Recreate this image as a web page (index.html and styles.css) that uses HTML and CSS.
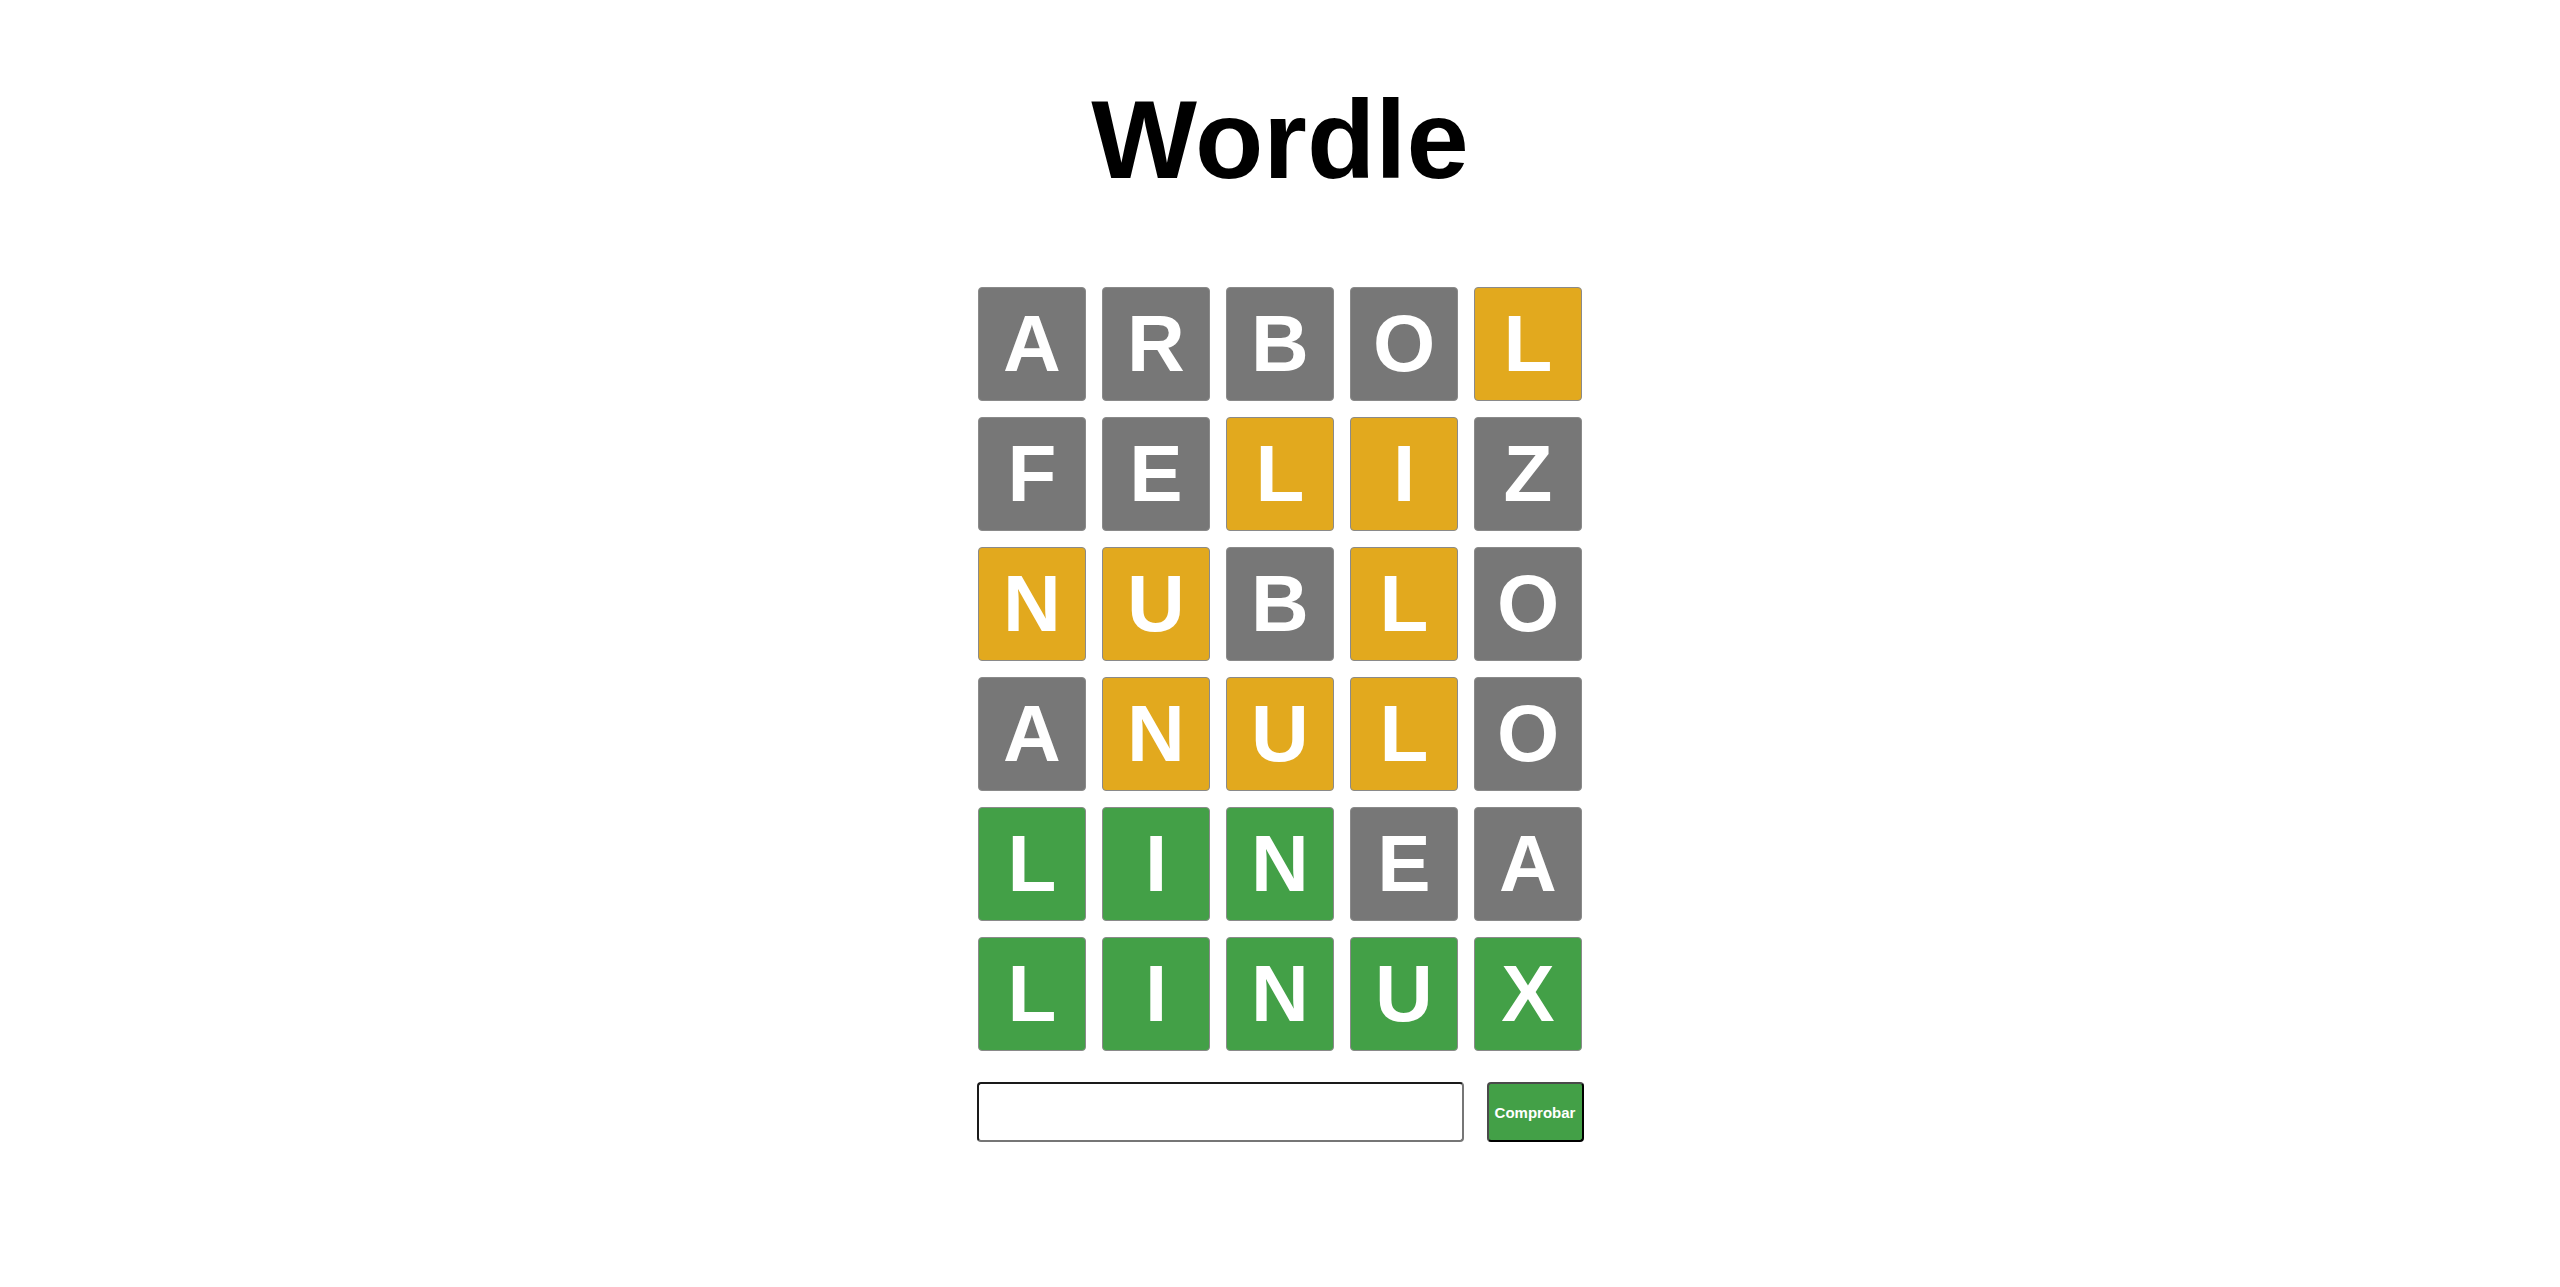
FILE: index.html
```html
<!DOCTYPE html>
<html lang="es">
<head>
<meta charset="utf-8">
<title>Wordle</title>
<link rel="stylesheet" href="styles.css">
</head>
<body>
<main class="app">
  <h1 class="title">Wordle</h1>

  <section class="board">
    <div class="tile absent">A</div>
    <div class="tile absent">R</div>
    <div class="tile absent">B</div>
    <div class="tile absent">O</div>
    <div class="tile present">L</div>

    <div class="tile absent">F</div>
    <div class="tile absent">E</div>
    <div class="tile present">L</div>
    <div class="tile present">I</div>
    <div class="tile absent">Z</div>

    <div class="tile present">N</div>
    <div class="tile present">U</div>
    <div class="tile absent">B</div>
    <div class="tile present">L</div>
    <div class="tile absent">O</div>

    <div class="tile absent">A</div>
    <div class="tile present">N</div>
    <div class="tile present">U</div>
    <div class="tile present">L</div>
    <div class="tile absent">O</div>

    <div class="tile correct">L</div>
    <div class="tile correct">I</div>
    <div class="tile correct">N</div>
    <div class="tile absent">E</div>
    <div class="tile absent">A</div>

    <div class="tile correct">L</div>
    <div class="tile correct">I</div>
    <div class="tile correct">N</div>
    <div class="tile correct">U</div>
    <div class="tile correct">X</div>
  </section>

  <form class="guess-form">
    <input class="guess-input" type="text" maxlength="5">
    <button class="guess-button" type="button">Comprobar</button>
  </form>
</main>
</body>
</html>
```

FILE: styles.css
```css
html, body {
  margin: 0;
  padding: 0;
  background: #ffffff;
}

body {
  font-family: "Liberation Sans", Arial, sans-serif;
  color: #000;
}

.app {
  display: flex;
  flex-direction: column;
  align-items: center;
  padding-top: 75px;
}

.title {
  margin: 0;
  font-size: 112px;
  font-weight: bold;
  line-height: normal;
}

.board {
  margin-top: 83px;
  display: grid;
  grid-template-columns: repeat(5, 108px);
  grid-auto-rows: 114px;
  column-gap: 16px;
  row-gap: 16px;
}

.tile {
  box-sizing: border-box;
  display: flex;
  align-items: center;
  justify-content: center;
  border: 1px solid #8a8a8a;
  border-radius: 4px;
  color: #ffffff;
  font-size: 80px;
  font-weight: bold;
  line-height: 1;
}

.absent {
  background: #777777;
}

.present {
  background: #e2a91e;
}

.correct {
  background: #43a047;
}

.guess-form {
  margin: 31px 0 0 0;
  display: flex;
  gap: 23px;
  width: 607px;
}

.guess-input {
  box-sizing: border-box;
  width: 487px;
  height: 60px;
  margin: 0;
  padding: 0 10px;
  border: 2px solid #767676;
  border-top-color: #1a1a1a;
  border-left-color: #1a1a1a;
  border-radius: 4px;
  font-family: "Liberation Sans", Arial, sans-serif;
  font-size: 24px;
  background: #fff;
}

.guess-button {
  box-sizing: border-box;
  width: 97px;
  height: 60px;
  margin: 0;
  padding: 0;
  border: 2px solid #000;
  border-top-color: #4a4a4a;
  border-left-color: #4a4a4a;
  border-radius: 4px;
  background: #43a047;
  color: #ffffff;
  font-family: "Liberation Sans", Arial, sans-serif;
  font-size: 15px;
  font-weight: bold;
  cursor: pointer;
}
```
